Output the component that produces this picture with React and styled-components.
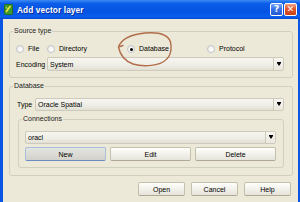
import React from 'react'
import styled, { createGlobalStyle, css } from 'styled-components'

const GlobalStyle = createGlobalStyle`
    html, body {
        margin: 0;
        padding: 0;
        background: #ECE9D8;
    }
    body {
        font-family: "Liberation Sans", Tahoma, Arial, sans-serif;
        font-size: 7px;
        color: #000;
    }
`

const Window = styled.div`
    position: relative;
    width: 300px;
    height: 202px;
    overflow: hidden;
    display: flex;
    flex-direction: column;
    background: #ECE9D8;
`

const TitleBar = styled.div`
    height: 19px;
    flex: none;
    display: flex;
    align-items: center;
    padding: 0 3px 0 4px;
    background: linear-gradient(180deg, #3D8BF5 0%, #0B5DE8 18%, #0452E2 60%, #0A5FEE 88%, #0347D0 100%);
`

const Title = styled.span`
    flex: 1;
    margin-left: 4px;
    font-size: 8.3px;
    font-weight: bold;
    color: #fff;
    text-shadow: 1px 1px 0 #0A2E9A;
    letter-spacing: 0.1px;
`

const CaptionButton = styled.span`
    width: 13px;
    height: 13px;
    box-sizing: border-box;
    margin-left: 1px;
    border: 1px solid #fff;
    border-radius: 2px;
    display: flex;
    align-items: center;
    justify-content: center;
    color: #fff;
    font-family: "DejaVu Sans", sans-serif;
    font-weight: bold;
    font-size: 9px;
    line-height: 1;
    background: ${p => p.$close
        ? 'linear-gradient(180deg, #F0A285 0%, #E0562C 45%, #C8401A 100%)'
        : 'linear-gradient(180deg, #7AA6F8 0%, #3A72E6 45%, #2358D2 100%)'};
`

const Frame = styled.div`
    flex: 1;
    display: flex;
    flex-direction: column;
    border-left: 3px solid #0A55E2;
    border-right: 2px solid #0A55E2;
    padding: 8px 5px 0 6px;
`

const Group = styled.fieldset`
    margin: ${p => p.$mt || 0}px 0 0 ${p => p.$ml || 0}px;
    padding: 0;
    min-width: 0;
    border: 1px solid #D0D0BF;
    border-radius: 3px;
`

const Legend = styled.legend`
    margin-left: 3px;
    padding: 0 1px;
    line-height: 8px;
    font-size: 7px;
    color: #222;
`

const Content = styled.div`
    padding: ${p => p.$pad};
    display: flex;
    flex-direction: column;
    gap: ${p => p.$gap || 0}px;
`

const RadioRow = styled.div`
    display: grid;
    grid-template-columns: 31px 80px 80px auto;
    height: 8px;
    align-items: center;
`

const RadioItem = styled.label`
    display: flex;
    align-items: center;
    gap: 4px;
    line-height: 8px;
`

const RadioDot = styled.span`
    width: 8px;
    height: 8px;
    box-sizing: border-box;
    border-radius: 50%;
    border: 1px solid #C3C7CE;
    background: radial-gradient(circle at 60% 65%, #FFFFFF 0%, #F2F2EE 55%, #D9D9D2 100%);
    display: flex;
    align-items: center;
    justify-content: center;
    ${p => p.$checked && css`
        &::after {
            content: "";
            width: 3px;
            height: 3px;
            border-radius: 50%;
            background: #000;
        }
    `}
`

const FieldRow = styled.div`
    display: flex;
    align-items: center;
`

const FieldLabel = styled.span`
    width: ${p => p.$w}px;
    flex: none;
`

const Combo = styled.div`
    flex: 1;
    height: ${p => p.$h}px;
    box-sizing: border-box;
    display: flex;
    align-items: center;
    padding-left: 2px;
    border: 1px solid #CDCABB;
    border-radius: 2px;
    background: linear-gradient(180deg, #F6F5F0 0%, #EEEDE5 60%, #E2E0D4 100%);
`

const ComboText = styled.span`
    flex: 1;
`

const ComboArrow = styled.span`
    width: 9px;
    align-self: stretch;
    border-left: 1px solid #CDCABB;
    display: flex;
    align-items: center;
    justify-content: center;
    background: linear-gradient(180deg, #F8F7F2 0%, #E9E7DD 100%);
    &::before {
        content: "";
        border-left: 2.5px solid transparent;
        border-right: 2.5px solid transparent;
        border-top: 3px solid #000;
        box-shadow: 0 -1px 0 #000;
    }
`

const ButtonGrid = styled.div`
    display: grid;
    grid-template-columns: 1fr 1fr 1fr;
    gap: 4px;
`

const Button = styled.button`
    height: 14px;
    width: ${p => (p.$w ? `${p.$w}px` : 'auto')};
    padding: 0;
    font-family: inherit;
    font-size: 7px;
    color: #000;
    border: 1px solid #C4C0AE;
    border-bottom-color: #ADA994;
    border-radius: 2px;
    background: linear-gradient(180deg, #FEFEFC 0%, #F2F1EA 50%, #E6E4DA 100%);
    ${p => p.$focus && css`
        border-color: #A9BEDD;
        border-bottom-color: #6A8CC2;
        background: linear-gradient(180deg, #E4E4E0 0%, #DCDCD6 50%, #D2D1CA 100%);
    `}
`

const Footer = styled.div`
    display: flex;
    justify-content: flex-end;
    gap: 6px;
    margin: 6px 2px 0 0;
`

const Annotation = styled.svg`
    position: absolute;
    left: 0;
    top: 0;
    pointer-events: none;
`

const AppIcon = () => (
    <svg width="9" height="11" viewBox="0 0 9 11">
        <rect x="0.5" y="0.5" width="8" height="10" rx="1" fill="#3C9A2E" stroke="#2A6E1F" />
        <path d="M2 8 L6.5 2" stroke="#F3E33A" strokeWidth="1.6" />
        <path d="M2 3 L3.5 5" stroke="#C8E86A" strokeWidth="1" />
    </svg>
)

const Radio = ({ label, checked }) => (
    <RadioItem>
        <RadioDot $checked={checked} />
        {label}
    </RadioItem>
)

const Select = ({ value, h }) => (
    <Combo $h={h}>
        <ComboText>{value}</ComboText>
        <ComboArrow />
    </Combo>
)

export default function App() {
    return (
        <>
            <GlobalStyle />
            <Window>
                <TitleBar>
                    <AppIcon />
                    <Title>Add vector layer</Title>
                    <CaptionButton>?</CaptionButton>
                    <CaptionButton $close>✕</CaptionButton>
                </TitleBar>
                <Frame>
                    <Group>
                        <Legend>Source type</Legend>
                        <Content $pad="10px 8px 6px 6px" $gap={4}>
                            <RadioRow>
                                <Radio label="File" />
                                <Radio label="Directory" />
                                <Radio label="Database" checked />
                                <Radio label="Protocol" />
                            </RadioRow>
                            <FieldRow>
                                <FieldLabel $w={31}>Encoding</FieldLabel>
                                <Select value="System" h={14} />
                            </FieldRow>
                        </Content>
                    </Group>
                    <Group $mt={4}>
                        <Legend>Database</Legend>
                        <Content $pad="8px 8px 7px 7px" $gap={4}>
                            <FieldRow>
                                <FieldLabel $w={18}>Type</FieldLabel>
                                <Select value="Oracle Spatial" h={13} />
                            </FieldRow>
                            <Group $ml={1}>
                                <Legend>Connections</Legend>
                                <Content $pad="8px 7px 6px 6px" $gap={3}>
                                    <FieldRow>
                                        <Select value="oracl" h={13} />
                                    </FieldRow>
                                    <ButtonGrid>
                                        <Button $focus>New</Button>
                                        <Button>Edit</Button>
                                        <Button>Delete</Button>
                                    </ButtonGrid>
                                </Content>
                            </Group>
                        </Content>
                    </Group>
                    <Footer>
                        <Button $w={47}>Open</Button>
                        <Button $w={47}>Cancel</Button>
                        <Button $w={47}>Help</Button>
                    </Footer>
                </Frame>
                <Annotation width="300" height="202" viewBox="0 0 300 202">
                    <path
                        d="M123 45.5 L118.5 47 C121 40 130 34.5 145 33 C158 32 168 34 170.5 42 C172 50 170 58 163 62 C156 66 142 67 133 64 C125 61 120 55 118.5 47"
                        fill="none"
                        stroke="#B26E4A"
                        strokeWidth="1.4"
                        strokeLinecap="round"
                        strokeLinejoin="round"
                    />
                </Annotation>
            </Window>
        </>
    )
}
